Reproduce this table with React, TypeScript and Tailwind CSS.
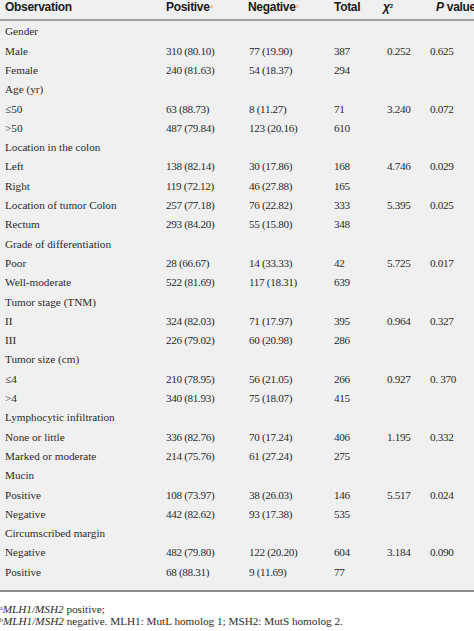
import React from 'react';

// MLH1/MSH2 expression vs clinicopathological features — static table.

type Row =
  | { kind: 'group'; label: string }
  | { kind: 'data'; label: string; pos: string; neg: string; total: string; chi?: string; p?: string };

const ROWS: Row[] = [
  { kind: 'group', label: 'Gender' },
  { kind: 'data', label: 'Male', pos: '310 (80.10)', neg: '77 (19.90)', total: '387', chi: '0.252', p: '0.625' },
  { kind: 'data', label: 'Female', pos: '240 (81.63)', neg: '54 (18.37)', total: '294' },
  { kind: 'group', label: 'Age (yr)' },
  { kind: 'data', label: '≤50', pos: '63 (88.73)', neg: '8 (11.27)', total: '71', chi: '3.240', p: '0.072' },
  { kind: 'data', label: '>50', pos: '487 (79.84)', neg: '123 (20.16)', total: '610' },
  { kind: 'group', label: 'Location in the colon' },
  { kind: 'data', label: 'Left', pos: '138 (82.14)', neg: '30 (17.86)', total: '168', chi: '4.746', p: '0.029' },
  { kind: 'data', label: 'Right', pos: '119 (72.12)', neg: '46 (27.88)', total: '165' },
  { kind: 'data', label: 'Location of tumor Colon', pos: '257 (77.18)', neg: '76 (22.82)', total: '333', chi: '5.395', p: '0.025' },
  { kind: 'data', label: 'Rectum', pos: '293 (84.20)', neg: '55 (15.80)', total: '348' },
  { kind: 'group', label: 'Grade of differentiation' },
  { kind: 'data', label: 'Poor', pos: '28 (66.67)', neg: '14 (33.33)', total: '42', chi: '5.725', p: '0.017' },
  { kind: 'data', label: 'Well-moderate', pos: '522 (81.69)', neg: '117 (18.31)', total: '639' },
  { kind: 'group', label: 'Tumor stage (TNM)' },
  { kind: 'data', label: 'II', pos: '324 (82.03)', neg: '71 (17.97)', total: '395', chi: '0.964', p: '0.327' },
  { kind: 'data', label: 'III', pos: '226 (79.02)', neg: '60 (20.98)', total: '286' },
  { kind: 'group', label: 'Tumor size (cm)' },
  { kind: 'data', label: '≤4', pos: '210 (78.95)', neg: '56 (21.05)', total: '266', chi: '0.927', p: '0. 370' },
  { kind: 'data', label: '>4', pos: '340 (81.93)', neg: '75 (18.07)', total: '415' },
  { kind: 'group', label: 'Lymphocytic infiltration' },
  { kind: 'data', label: 'None or little', pos: '336 (82.76)', neg: '70 (17.24)', total: '406', chi: '1.195', p: '0.332' },
  { kind: 'data', label: 'Marked or moderate', pos: '214 (75.76)', neg: '61 (27.24)', total: '275' },
  { kind: 'group', label: 'Mucin' },
  { kind: 'data', label: 'Positive', pos: '108 (73.97)', neg: '38 (26.03)', total: '146', chi: '5.517', p: '0.024' },
  { kind: 'data', label: 'Negative', pos: '442 (82.62)', neg: '93 (17.38)', total: '535' },
  { kind: 'group', label: 'Circumscribed margin' },
  { kind: 'data', label: 'Negative', pos: '482 (79.80)', neg: '122 (20.20)', total: '604', chi: '3.184', p: '0.090' },
  { kind: 'data', label: 'Positive', pos: '68 (88.31)', neg: '9 (11.69)', total: '77' },
];

const GRID = 'grid grid-cols-[161px_83px_85px_53px_43px_1fr] pl-[5px]';
const NUM = 'tracking-[-0.35px] whitespace-nowrap';

export default function App() {
  return (
    <div className="w-[474px] h-[631px] overflow-hidden bg-white text-[#2b2b2b] font-['Liberation_Serif',serif]">
      <div className="bg-[#f0f0f0] pb-[8px] border-b-2 border-[#8c8c8c]">
        <div
          className={`${GRID} h-[21px] border-b-2 border-[#a0a0a0] items-start text-[12px] leading-[14px] font-bold tracking-[-0.3px] text-[#1a1a1a] font-['Liberation_Sans',Arial,sans-serif]`}
        >
          <div>Observation</div>
          <div>
            Positive<sup className="text-[6px] text-[#f0a35a] font-normal">a</sup>
          </div>
          <div className="-ml-[1px]">
            Negative<sup className="text-[6px] text-[#f0a35a] font-normal">b</sup>
          </div>
          <div>Total</div>
          <div className="-ml-[4px]">
            <i>χ</i>
            <sup className="text-[6px]">2</sup>
          </div>
          <div className="ml-[6px] whitespace-nowrap">
            <i>P</i> value
          </div>
        </div>
        <div className="pt-[1.4px] text-[11.2px] leading-[19.3px]">
          {ROWS.map((r, i) =>
            r.kind === 'group' ? (
              <div key={i} className="pl-[5px] h-[19.3px] whitespace-nowrap">
                {r.label}
              </div>
            ) : (
              <div key={i} className={`${GRID} h-[19.3px]`}>
                <div className="whitespace-nowrap">{r.label}</div>
                <div className={NUM}>{r.pos}</div>
                <div className={NUM}>{r.neg}</div>
                <div className={NUM}>{r.total}</div>
                <div className={NUM}>{r.chi ?? ''}</div>
                <div className={NUM}>{r.p ?? ''}</div>
              </div>
            ),
          )}
        </div>
      </div>
      <div className="pt-[12px] text-[11.2px] leading-[11.5px] text-[#2b2b2b]">
        <div>
          <sup className="text-[6px]">a</sup>
          <i>MLH1/MSH2</i> positive;
        </div>
        <div>
          <sup className="text-[6px]">b</sup>
          <i>MLH1/MSH2</i> negative. MLH1: MutL homolog 1; MSH2: MutS homolog 2.
        </div>
      </div>
    </div>
  );
}
